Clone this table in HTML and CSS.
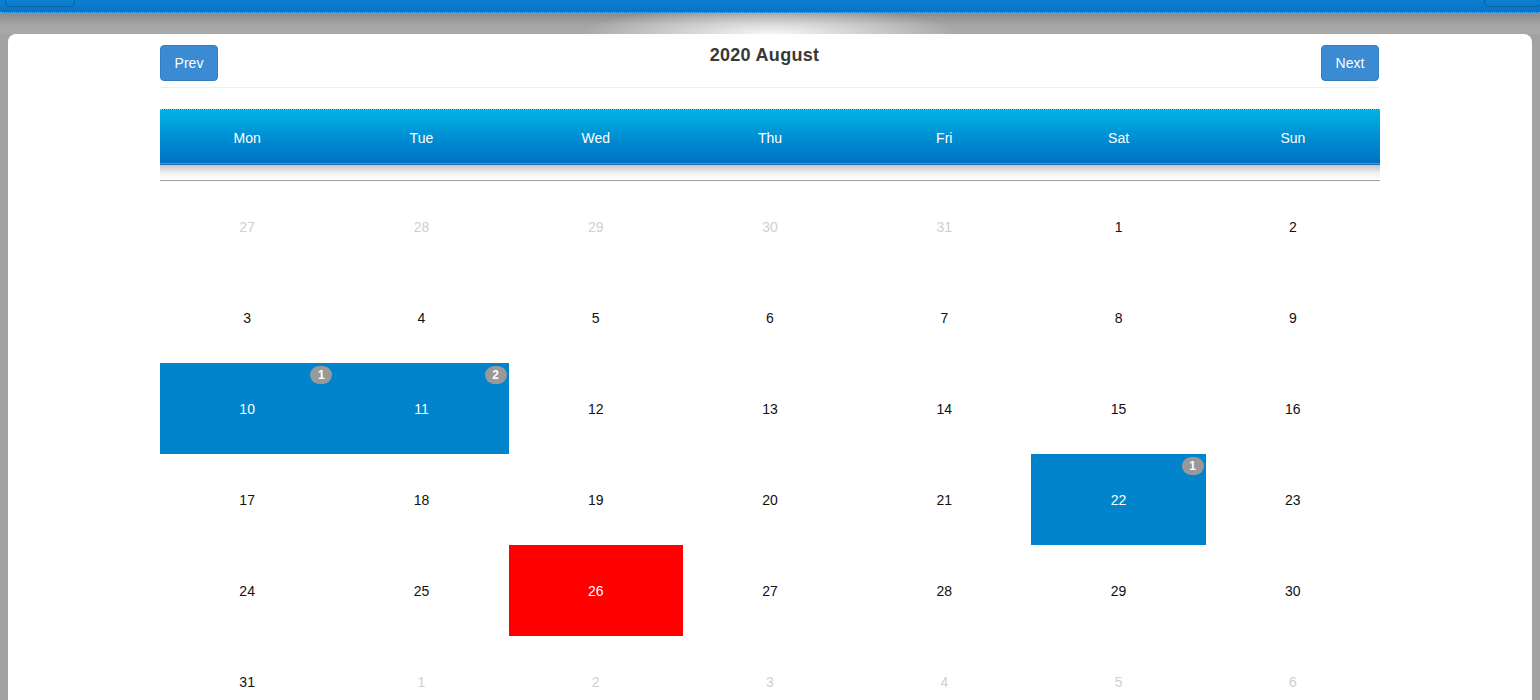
FILE: index.html
```html
<!DOCTYPE html>
<html>
<head>
<meta charset="utf-8">
<link rel="stylesheet" href="styles.css">
</head>
<body>
<div class="topbar">
  <div class="tb-btn tb-left"></div>
  <div class="tb-btn tb-right"></div>
</div>
<div class="shade"></div>
<div class="card">
  <div class="inner">
    <div class="nav">
      <button class="btn">Prev</button>
      <div class="title">2020 August</div>
      <button class="btn btn-next">Next</button>
    </div>
    <div class="head">
      <div>Mon</div><div>Tue</div><div>Wed</div><div>Thu</div><div>Fri</div><div>Sat</div><div>Sun</div>
    </div>
    <div class="strip"></div>
    <div class="grid">
      <div class="cell other">27</div><div class="cell other">28</div><div class="cell other">29</div><div class="cell other">30</div><div class="cell other">31</div><div class="cell">1</div><div class="cell">2</div>
      <div class="cell">3</div><div class="cell">4</div><div class="cell">5</div><div class="cell">6</div><div class="cell">7</div><div class="cell">8</div><div class="cell">9</div>
      <div class="cell booked">10<span class="badge">1</span></div><div class="cell booked">11<span class="badge">2</span></div><div class="cell">12</div><div class="cell">13</div><div class="cell">14</div><div class="cell">15</div><div class="cell">16</div>
      <div class="cell">17</div><div class="cell">18</div><div class="cell">19</div><div class="cell">20</div><div class="cell">21</div><div class="cell booked">22<span class="badge">1</span></div><div class="cell">23</div>
      <div class="cell">24</div><div class="cell">25</div><div class="cell today">26</div><div class="cell">27</div><div class="cell">28</div><div class="cell">29</div><div class="cell">30</div>
      <div class="cell">31</div><div class="cell other">1</div><div class="cell other">2</div><div class="cell other">3</div><div class="cell other">4</div><div class="cell other">5</div><div class="cell other">6</div>
    </div>
  </div>
</div>
</body>
</html>
```

FILE: styles.css
```css
* { box-sizing: border-box; }
html, body {
  margin: 0;
  padding: 0;
  height: 700px;
  overflow: hidden;
}
body {
  background: #a2a2a2;
  font-family: "Liberation Sans", Arial, sans-serif;
}
.topbar {
  height: 13px;
  background: linear-gradient(#0a7fd2, #0a74c4);
  border-bottom: 1px dotted #5aaee8;
  box-shadow: inset 0 -3px 0 #0a74c4, 0 1px 0 #1a6fb4;
  display: flex;
  justify-content: space-between;
  overflow: hidden;
}
.tb-btn {
  height: 30px;
  margin-top: -23px;
  background: linear-gradient(#1b8ede, #0a7acb);
  border: 1px solid #075fa3;
  border-radius: 5px;
}
.tb-left { width: 70px; margin-left: 5px; }
.tb-right { width: 58px; margin-right: -2px; }
.shade {
  height: 21px;
  background:
    radial-gradient(ellipse 190px 28px at 50% 100%, rgba(255,255,255,0.9), rgba(255,255,255,0) 100%),
    linear-gradient(#8c8c8c, #a6a6a6 60%, #a8a8a8);
}
.card {
  margin: 0 8px;
  background: #fff;
  border-radius: 8px 8px 0 0;
  height: 700px;
}
.inner {
  width: 1220px;
  margin: 0 auto;
}
.nav {
  display: flex;
  justify-content: space-between;
  align-items: flex-start;
  padding-top: 11px;
  height: 54px;
  border-bottom: 1px solid #efefef;
}
.btn {
  width: 58px;
  height: 36px;
  background: #3a8bd1;
  border: 1px solid #3280c4;
  border-radius: 4px;
  color: #fff;
  font-family: "Liberation Sans", Arial, sans-serif;
  font-size: 14px;
  padding: 0;
}
.btn-next { margin-right: 1px; }
.title {
  font-size: 18px;
  font-weight: bold;
  color: #383838;
  line-height: 20px;
  margin-right: 10px;
  letter-spacing: 0.3px;
}
.head {
  margin-top: 21px;
  height: 55px;
  display: grid;
  grid-template-columns: repeat(7, 1fr);
  align-items: center;
  background: linear-gradient(#00b3e2, #0090d4 50%, #0071c2);
  border-top: 1px dotted #66d0f0;
  border-bottom: 1px dotted #4a9ae0;
  color: #fff;
  font-size: 14px;
  text-align: center;
  padding-top: 2px;
}
.strip {
  height: 17px;
  background: linear-gradient(#c4c4c4, #f2f2f2 55%, #ffffff);
  border-bottom: 1px solid #9e9e9e;
  border-top: 1px solid #1f6fb0;
}
.grid {
  display: grid;
  grid-template-columns: repeat(7, 1fr);
  grid-auto-rows: 91px;
}
.cell {
  position: relative;
  display: flex;
  align-items: center;
  justify-content: center;
  font-size: 14px;
  color: #111;
}
.cell.other { color: #d0d0d0; }
.cell.booked { background: #0184cc; color: #fff; }
.cell.today { background: #ff0000; color: #fff; }
.badge {
  position: absolute;
  top: 3px;
  right: 2px;
  width: 22px;
  height: 18px;
  border-radius: 9px;
  background: #999;
  color: #fff;
  font-size: 12px;
  font-weight: bold;
  display: flex;
  align-items: center;
  justify-content: center;
}
```
